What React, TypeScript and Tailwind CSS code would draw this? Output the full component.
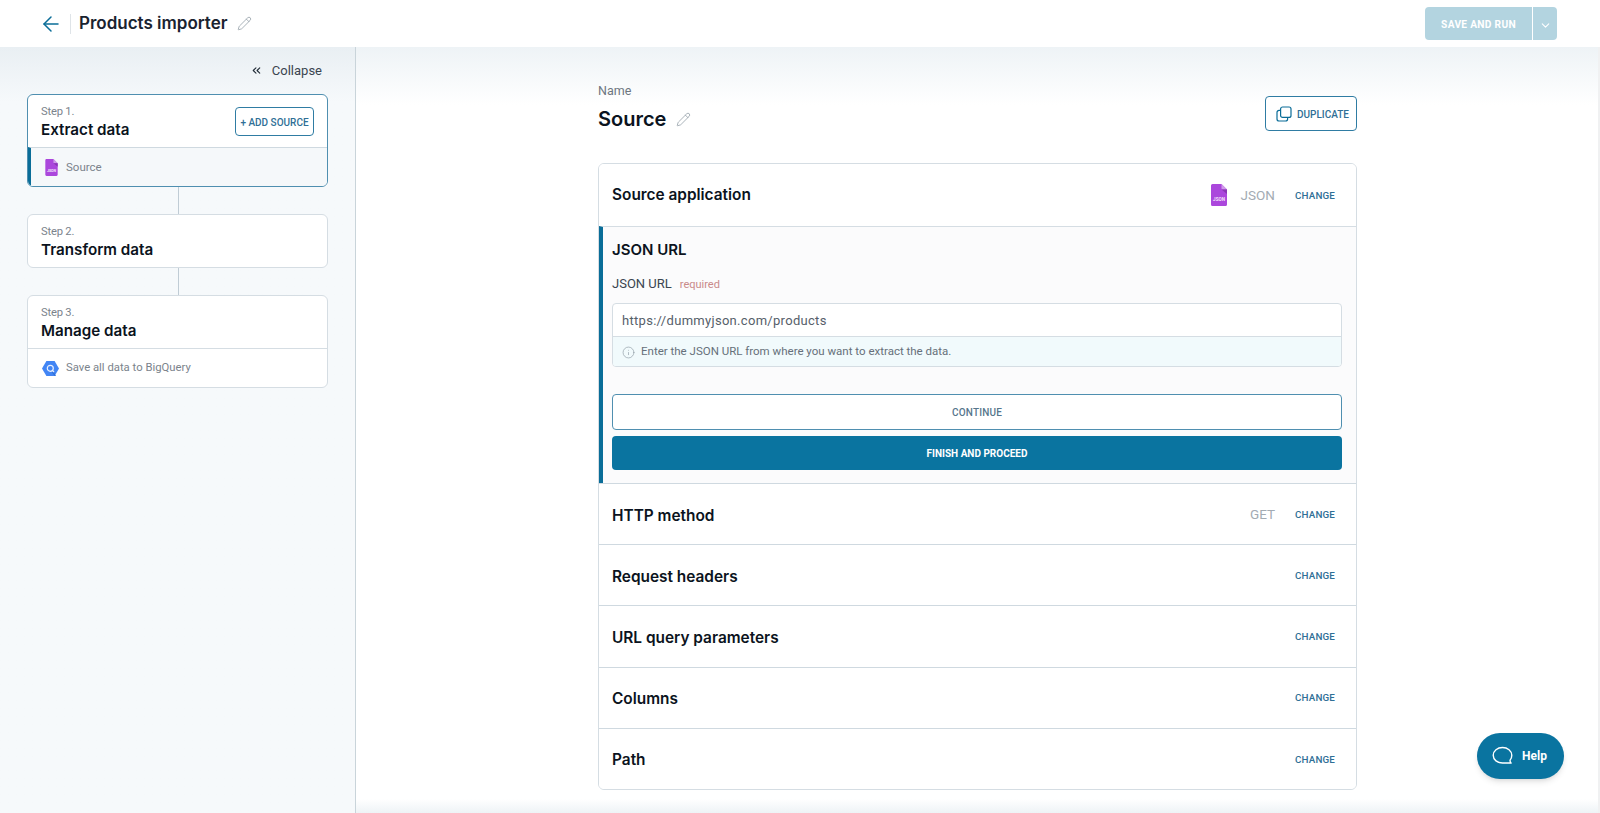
import { ArrowLeft, ChevronDown, ChevronsLeft, Info, Pencil } from "lucide-react";

const body = "font-['Roboto',sans-serif]";
const head = "font-['Inter',sans-serif]";

function JsonIcon({ w, h }: { w: number; h: number }) {
  return (
    <svg width={w} height={h} viewBox="0 0 16 22" className="shrink-0">
      <path d="M1.5 0H10.5L16 5.5V20.5A1.5 1.5 0 0 1 14.5 22H1.5A1.5 1.5 0 0 1 0 20.5V1.5A1.5 1.5 0 0 1 1.5 0Z" fill="#ab47dc" />
      <path d="M10.5 0L16 5.5H11.5A1 1 0 0 1 10.5 4.5Z" fill="#cf9ae9" />
      <path d="M10.5 5.5H16V10Z" fill="#8a35b5" />
      <text x="8" y="16.5" textAnchor="middle" fontSize="4.6" fontWeight="700" fill="#f3e3fb" fontFamily="Roboto, sans-serif">JSON</text>
    </svg>
  );
}

function BigQueryIcon() {
  return (
    <svg width="17" height="15" viewBox="0 0 17 15" className="shrink-0">
      <path d="M4.4 0H12.6L17 7.5L12.6 15H4.4L0 7.5Z" fill="#4285f4" />
      <path d="M9 10L12.6 15H14L10.5 9Z" fill="#2f6fd8" />
      <circle cx="8.3" cy="7.3" r="3" fill="none" stroke="#e8f0fe" strokeWidth="1.2" />
      <path d="M10.4 9.4L12 11" stroke="#e8f0fe" strokeWidth="1.2" />
    </svg>
  );
}

function StepHead({ n, title }: { n: number; title: string }) {
  return (
    <div className="flex flex-col pt-[1px] -ml-px">
      <span className={`${body} text-[11.2px] leading-[16px] text-[#7b838c] tracking-[-0.2px]`}>Step {n}.</span>
      <span className={`${head} text-[15.2px] leading-[20px] font-semibold text-[#0b1320]`}>{title}</span>
    </div>
  );
}

function ChangeLink() {
  return <span className={`${body} text-[9.8px] font-medium tracking-[0.15px] text-[#2f6f96] pt-[2px]`}>CHANGE</span>;
}

function AccordionRow({ title, value }: { title: string; value?: string }) {
  return (
    <div className="h-[61.2px] flex items-center pl-[13px] pr-[21px] border-t border-[#cfd9e0] bg-white">
      <span className={`${head} text-[15.4px] font-semibold text-[#0b1320] pt-[2px]`}>{title}</span>
      <div className="ml-auto flex items-center">
        {value && <span className={`${body} text-[13.5px] text-[#a3abb3] mr-[20px]`}>{value}</span>}
        <ChangeLink />
      </div>
    </div>
  );
}

function CopyIcon() {
  return (
    <svg width="16" height="16" viewBox="0 0 16 16" fill="none" stroke="#0a6d98" strokeWidth="1.2" className="shrink-0">
      <rect x="4.6" y="1" width="10.4" height="10.4" rx="2" />
      <path d="M4.6 4.4H3A2 2 0 0 0 1 6.4V13A2 2 0 0 0 3 15H9.6A2 2 0 0 0 11.6 13V11.4" />
    </svg>
  );
}

export default function App() {
  return (
    <div className="h-[813px] w-[1600px] overflow-hidden flex flex-col bg-white">
      <header className="h-[47px] shrink-0 flex items-center bg-white pl-[39px] pr-[43px]">
        <ArrowLeft size={24} strokeWidth={1.5} className="text-[#0a6d98]" />
        <div className="w-px h-[20px] bg-[#dfe4e8] ml-[7px] mr-[8px]" />
        <span className={`${head} text-[17px] font-semibold text-[#1a2330]`}>Products importer</span>
        <Pencil size={15} strokeWidth={1.2} className="text-[#8d99a3] ml-[9px]" />
        <div className="ml-auto flex h-[33px]">
          <button className={`${body} w-[107px] rounded-l-[4px] bg-[#b3d4e0] text-white text-[10.2px] font-bold tracking-[0.3px] pt-[2px]`}>SAVE AND RUN</button>
          <button className="w-[24px] ml-px rounded-r-[4px] bg-[#b3d4e0] text-white flex items-center justify-center pt-[3px]">
            <ChevronDown size={13} strokeWidth={2} />
          </button>
        </div>
      </header>

      <div className="flex-1 flex min-h-0">
        <aside className="w-[356px] shrink-0 border-r border-[#c9d4da] bg-[#f6f9fb] bg-gradient-to-b from-[#e9eff3] to-[#f6f9fb] to-[55px] pl-[27px] pr-[27px]">
          <div className="h-[47px] flex items-center justify-end pr-[6px] text-[#3a4550]">
            <ChevronsLeft size={13} strokeWidth={2} className="mr-[9px] text-[#1f2a35]" />
            <span className={`${body} text-[13px]`}>Collapse</span>
          </div>
          <div className="rounded-[6px] border border-[#4f8fb0] bg-white overflow-hidden">
            <div className="h-[52px] flex items-center justify-between pl-[14px] pr-[13px]">
              <StepHead n={1} title="Extract data" />
              <button className={`${body} w-[79px] h-[29px] rounded-[4px] border border-[#2f7ca3] text-[10px] font-medium text-[#2f6f96] pt-[2px]`}>+ ADD SOURCE</button>
            </div>
            <div className="h-[39px] flex items-center border-t border-[#cfd9e0] bg-[#f5f8fa] border-l-[3px] border-l-[#0a6d98] pl-[14px]">
              <JsonIcon w={13} h={17} />
              <span className={`${body} text-[11.5px] text-[#7b838c] ml-[8px] pt-[1px]`}>Source</span>
            </div>
          </div>
          <div className="w-px h-[27px] bg-[#c0ccd5] ml-[151px]" />
          <div className="rounded-[6px] border border-[#d5dde3] bg-white h-[54px] flex items-center pl-[14px]">
            <StepHead n={2} title="Transform data" />
          </div>
          <div className="w-px h-[27px] bg-[#c0ccd5] ml-[151px]" />
          <div className="rounded-[6px] border border-[#d5dde3] bg-white overflow-hidden">
            <div className="h-[52px] flex items-center pl-[14px]">
              <StepHead n={3} title="Manage data" />
            </div>
            <div className="h-[39px] flex items-center border-t border-[#d5dde3] pl-[14px]">
              <BigQueryIcon />
              <span className={`${body} text-[11.3px] text-[#7b838c] ml-[7px]`}>Save all data to BigQuery</span>
            </div>
          </div>
        </aside>

        <main className="relative flex-1 min-w-0 bg-gradient-to-b from-[#eef3f6] to-white to-[58px] border-r-2 border-[#f0f1f2]">
          <div className="w-[759px] ml-[242px]">
            <div className="h-[116px] flex items-start justify-between pt-[36px]">
              <div className="flex flex-col">
                <span className={`${body} text-[12.5px] leading-[16px] text-[#6d7680]`}>Name</span>
                <div className="flex items-center mt-[7px]">
                  <span className={`${head} text-[20px] leading-[26px] font-semibold text-[#0b1320]`}>Source</span>
                  <Pencil size={15} strokeWidth={1.2} className="text-[#8d99a3] ml-[10px]" />
                </div>
              </div>
              <button className="mt-[13px] w-[92px] h-[35px] rounded-[4px] border border-[#2f7ca3] bg-white flex items-center pl-[10px] text-[#2f6f96]">
                <CopyIcon />
                <span className={`${body} text-[10px] font-medium ml-[5px] pt-[1px]`}>DUPLICATE</span>
              </button>
            </div>

            <div className="h-[627px] rounded-[6px] border border-[#d5dde3] overflow-hidden bg-white">
              <div className="h-[62px] flex items-center pl-[13px] pr-[21px] bg-white">
                <span className={`${head} text-[15.4px] font-semibold text-[#0b1320]`}>Source application</span>
                <div className="ml-auto flex items-center">
                  <JsonIcon w={16} h={22} />
                  <span className={`${body} text-[13.5px] text-[#a3abb3] ml-[14px] mr-[20px]`}>JSON</span>
                  <ChangeLink />
                </div>
              </div>
              <div className="h-[257px] border-t border-[#d5dde3] border-l-[4px] border-l-[#0a6d98] bg-[#fbfbfc] pl-[9px] pr-[14px]">
                <div className={`${head} text-[15px] font-semibold text-[#0b1320] pt-[13px] leading-[20px]`}>JSON URL</div>
                <div className="flex items-baseline mt-[16px] leading-[16px]">
                  <span className={`${body} text-[13px] text-[#3a4550]`}>JSON URL</span>
                  <span className={`${body} text-[11px] text-[#c98a8a] ml-[8px]`}>required</span>
                </div>
                <div className="mt-[10px] h-[64px] rounded-[4px] border border-[#d5dde3] overflow-hidden bg-white">
                  <div className={`${body} h-[32px] flex items-center pl-[9px] pt-[1px] text-[13px] tracking-[0.3px] text-[#56606a]`}>https://dummyjson.com/products</div>
                  <div className="h-[31px] flex items-center border-t border-[#d5dde3] bg-[#f1fafc] pl-[9px] text-[#66707a]">
                    <Info size={13} strokeWidth={1.2} className="text-[#8d99a3]" />
                    <span className={`${body} text-[11.5px] ml-[6px]`}>Enter the JSON URL from where you want to extract the data.</span>
                  </div>
                </div>
                <button className={`${body} mt-[27px] w-full h-[36px] rounded-[4px] border border-[#4f8fb0] bg-white text-[10px] font-medium text-[#56768c] tracking-[0.2px]`}>CONTINUE</button>
                <button className={`${body} mt-[6px] w-full h-[34px] rounded-[4px] bg-[#0a74a0] text-white text-[10px] font-bold`}>FINISH AND PROCEED</button>
              </div>
              <AccordionRow title="HTTP method" value="GET" />
              <AccordionRow title="Request headers" />
              <AccordionRow title="URL query parameters" />
              <AccordionRow title="Columns" />
              <AccordionRow title="Path" />
            </div>
          </div>

          <div className="absolute left-0 right-0 bottom-0 h-[14px] bg-gradient-to-b from-white to-[#eef3f6]" />
          <button className="absolute left-[1121px] top-[686px] w-[87px] h-[46px] rounded-full bg-[#0a74a0] shadow-md flex items-center pl-[15px] text-white">
            <svg width="21" height="20" viewBox="0 0 21 20" fill="none" stroke="white" strokeWidth="1.4">
              <path d="M10.5 1.5C5.5 1.5 1.2 4.8 1.2 9.3C1.2 13.8 5.5 17 10.5 17H19V16.9C18.4 16.3 18 15.5 18 14.2C19.3 12.9 19.8 11.2 19.8 9.3C19.8 4.8 15.5 1.5 10.5 1.5Z" />
            </svg>
            <span className={`${body} text-[12px] font-bold ml-[9px]`}>Help</span>
          </button>
        </main>
      </div>
    </div>
  );
}
